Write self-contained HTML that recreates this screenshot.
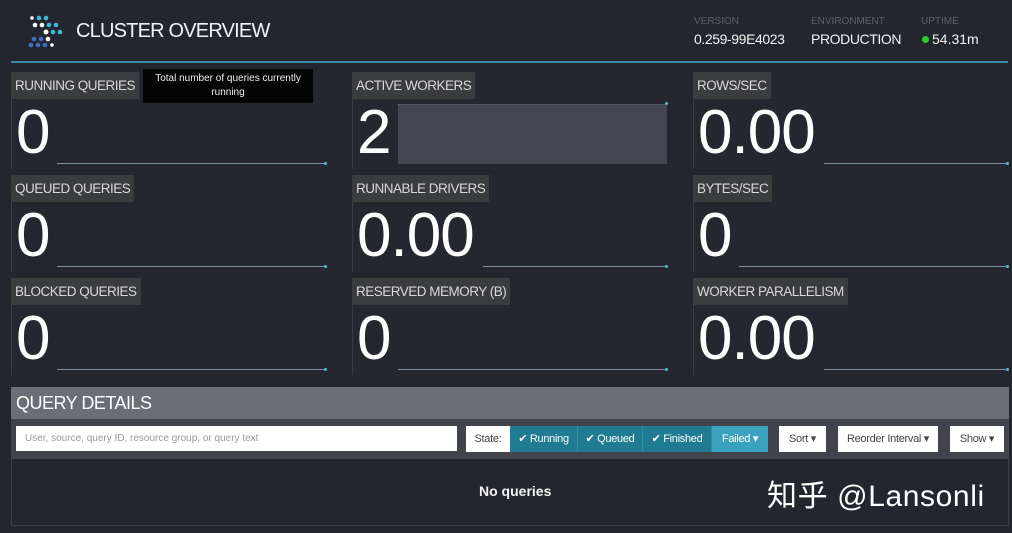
<!DOCTYPE html><html><head><style>
*{margin:0;padding:0;box-sizing:border-box}
body{width:1012px;height:533px;background:#23262e;font-family:"Liberation Sans",sans-serif;color:#fff;position:relative;overflow:hidden}
.a{position:absolute}
.lbl{position:absolute;background:#3b3c3f;color:#d8d8d8;font-size:13.5px;letter-spacing:-0.5px;height:27px;line-height:27px;padding:0 4px}
.tile{position:absolute;width:316px;height:97px;border-left:1px solid #3a3d45;background:#24272f}
.num{position:absolute;left:4px;top:28px;font-size:62px;line-height:66px;color:#fff;letter-spacing:-1px}
.spark{position:absolute;height:1px;background:#7c93a3;bottom:5px;right:2px}
.dot{position:absolute;width:3px;height:3px;border-radius:50%;background:#5bb8d6;right:0;bottom:4px}
.btn{position:absolute;top:426px;height:26px;line-height:26px;font-size:11px;letter-spacing:-0.3px;background:#fff;color:#444;text-align:center}
.st{position:absolute;top:426px;height:26px;line-height:26px;font-size:11px;letter-spacing:-0.3px;color:#fff;background:#1f7c93;text-align:center;border-right:1px solid #2c8da4}
</style></head><body>
<svg class="a" style="left:27px;top:15px" width="40" height="34">
<g fill="#3f6fc2"><circle cx="4" cy="30" r="2.3"/><circle cx="11" cy="30" r="2.3"/><circle cx="18" cy="30" r="2.3"/><circle cx="7" cy="24" r="2.3"/><circle cx="14" cy="24" r="2.3"/></g>
<g fill="#3fb8d8"><circle cx="12" cy="3" r="2.3"/><circle cx="19" cy="3" r="2.3"/><circle cx="22" cy="10" r="2.3"/><circle cx="29" cy="10" r="2.3"/><circle cx="33" cy="17" r="2.3"/><circle cx="26" cy="17" r="2.3"/></g>
<g fill="#fff"><circle cx="5" cy="3" r="1.8"/><circle cx="8" cy="10" r="2.3"/><circle cx="15" cy="10" r="2.3"/><circle cx="19" cy="17" r="2.5"/><circle cx="21" cy="24" r="2.3"/><circle cx="25" cy="30" r="1.8"/></g>
</svg>
<div class="a" style="left:76px;top:20px;font-size:20px;letter-spacing:-0.8px;color:#f2f2f2">CLUSTER OVERVIEW</div>
<div class="a" style="left:694px;top:16px;font-size:10px;color:#5b606a">VERSION</div>
<div class="a" style="left:694px;top:31px;font-size:14px;letter-spacing:-0.4px;color:#f2f2f2">0.259-99E4023</div>
<div class="a" style="left:811px;top:16px;font-size:10px;color:#5b606a">ENVIRONMENT</div>
<div class="a" style="left:811px;top:31px;font-size:14px;letter-spacing:-0.4px;color:#f2f2f2">PRODUCTION</div>
<div class="a" style="left:921px;top:16px;font-size:10px;color:#5b606a">UPTIME</div>
<div class="a" style="left:922px;top:36px;width:7px;height:7px;border-radius:50%;background:#2ad02a"></div>
<div class="a" style="left:932px;top:31px;font-size:14px;color:#f2f2f2">54.31m</div>
<div class="a" style="left:11px;top:61px;width:997px;height:2px;background:#3a8ca6"></div>

<div class="tile" style="left:11px;top:72px"><div class="num">0</div><div class="spark" style="left:45px"></div><div class="dot"></div></div>
<div class="lbl" style="left:11px;top:72px">RUNNING QUERIES</div>
<div class="a" style="left:143px;top:69px;width:170px;height:34px;background:#050505;color:#eee;font-size:10px;text-align:center;line-height:14px;padding-top:3px">Total number of queries currently running</div>
<div class="tile" style="left:352px;top:72px"><div class="num">2</div><div class="a" style="left:45px;top:32px;width:269px;height:60px;background:#434753;border-top:1px solid #555a66"></div><div class="dot" style="top:30px"></div></div>
<div class="lbl" style="left:352px;top:72px">ACTIVE WORKERS</div>
<div class="tile" style="left:693px;top:72px"><div class="num">0.00</div><div class="spark" style="left:130px"></div><div class="dot"></div></div>
<div class="lbl" style="left:693px;top:72px">ROWS/SEC</div>

<div class="tile" style="left:11px;top:175px"><div class="num">0</div><div class="spark" style="left:45px"></div><div class="dot"></div></div>
<div class="lbl" style="left:11px;top:175px">QUEUED QUERIES</div>
<div class="tile" style="left:352px;top:175px"><div class="num">0.00</div><div class="spark" style="left:130px"></div><div class="dot"></div></div>
<div class="lbl" style="left:352px;top:175px">RUNNABLE DRIVERS</div>
<div class="tile" style="left:693px;top:175px"><div class="num">0</div><div class="spark" style="left:45px"></div><div class="dot"></div></div>
<div class="lbl" style="left:693px;top:175px">BYTES/SEC</div>

<div class="tile" style="left:11px;top:278px"><div class="num">0</div><div class="spark" style="left:45px"></div><div class="dot"></div></div>
<div class="lbl" style="left:11px;top:278px">BLOCKED QUERIES</div>
<div class="tile" style="left:352px;top:278px"><div class="num">0</div><div class="spark" style="left:45px"></div><div class="dot"></div></div>
<div class="lbl" style="left:352px;top:278px">RESERVED MEMORY (B)</div>
<div class="tile" style="left:693px;top:278px"><div class="num">0.00</div><div class="spark" style="left:130px"></div><div class="dot"></div></div>
<div class="lbl" style="left:693px;top:278px">WORKER PARALLELISM</div>

<div class="a" style="left:11px;top:387px;width:998px;height:32px;background:#6b6e76;font-size:18px;letter-spacing:-0.5px;line-height:32px;padding-left:5px;color:#fff">QUERY DETAILS</div>
<div class="a" style="left:11px;top:419px;width:998px;height:40px;background:#41444c"></div>
<div class="a" style="left:11px;top:459px;width:998px;height:67px;border:1px solid #3a3d45;border-top:none"></div>
<div class="a" style="left:16px;top:426px;width:441px;height:25px;background:#fff;color:#999;font-size:10px;line-height:25px;padding-left:9px">User, source, query ID, resource group, or query text</div>
<div class="btn" style="left:466px;width:44px">State:</div>
<div class="st" style="left:510px;width:68px">✔ Running</div>
<div class="st" style="left:578px;width:65px">✔ Queued</div>
<div class="st" style="left:643px;width:69px">✔ Finished</div>
<div class="st" style="left:712px;width:56px;background:#3aa2bf;border:none">Failed ▾</div>
<div class="btn" style="left:779px;width:47px">Sort ▾</div>
<div class="btn" style="left:838px;width:100px">Reorder Interval ▾</div>
<div class="btn" style="left:950px;width:54px">Show ▾</div>
<div class="a" style="left:479px;top:483px;font-size:14px;font-weight:bold;color:#f2f2f2">No queries</div>
<div class="a" style="left:767px;top:471px;font-size:30px;letter-spacing:0.6px;color:#fff;font-family:'Liberation Sans','Noto Sans CJK SC',sans-serif">知乎 @Lansonli</div>
</body></html>
